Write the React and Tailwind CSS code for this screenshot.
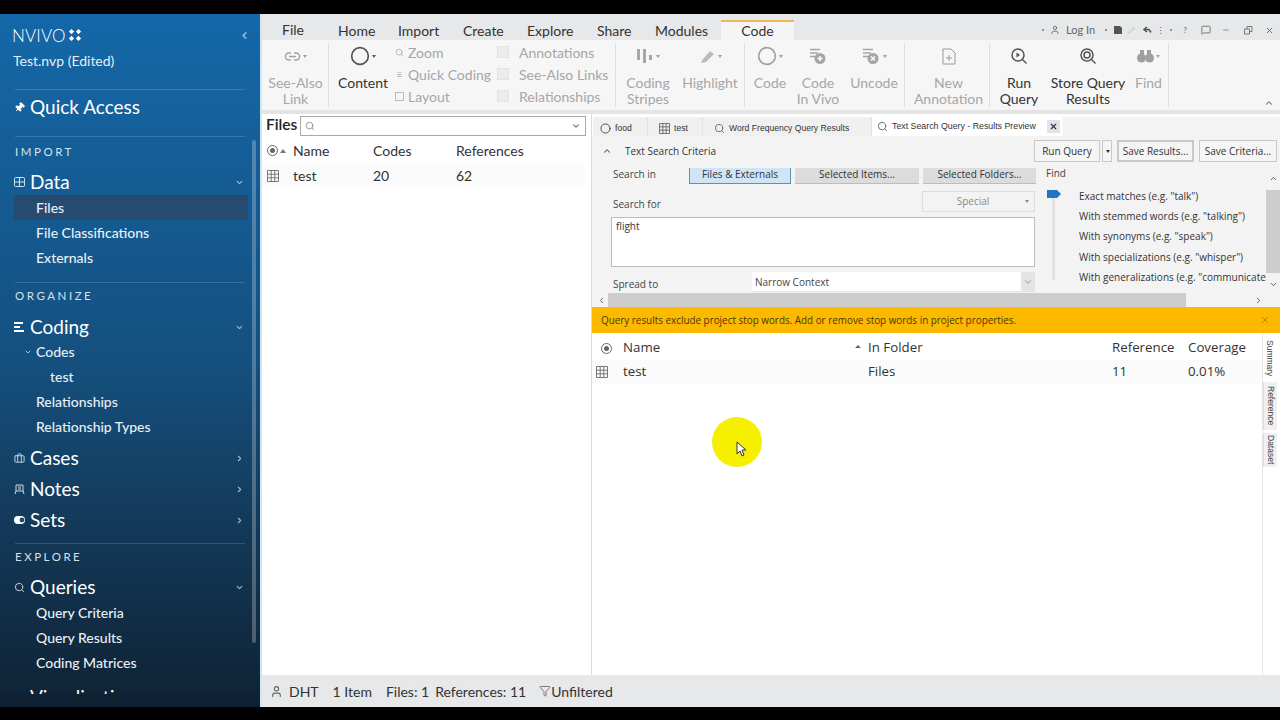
import React from 'react';
import {
  Pin, ChevronDown, ChevronRight, ChevronLeft, ChevronUp, Search, Link2, Circle, Briefcase,
  Minus, X, MessageSquare, User, Filter, Pencil,
} from 'lucide-react';

const LATO = { fontFamily: 'Lato, sans-serif' };
const ARIAL = { fontFamily: '"Liberation Sans", sans-serif' };

const GridIcon = ({ size = 12, className = '' }) => (
  <svg width={size} height={size} viewBox="0 0 12 12" fill="none" stroke="currentColor" className={className}>
    <path d="M.5.5h11v11H.5zM.5 4.2h11M.5 7.8h11M4.2.5v11M7.8.5v11" />
  </svg>
);

const NavHead = ({ icon, label, chevron }) => (
  <div className="flex items-center h-[31px] pt-[3px] pl-[14px] pr-[16px] text-[19px] text-white">
    <span className="w-[16px] flex justify-start text-[#c9dbe8]">{icon}</span>
    <span className="flex-1">{label}</span>
    {chevron === 'down' && <ChevronDown size={9} strokeWidth={3} className="text-[#9fb9cc]" />}
    {chevron === 'right' && <ChevronRight size={9} strokeWidth={3} className="text-[#9fb9cc]" />}
  </div>
);

const NavItem = ({ label, active, indent = 'pl-[22px]' }) => (
  <div className={`h-[25px] ml-[14px] mr-[12px] flex items-center text-[14px] text-[#e8f0f6] font-medium ${indent} ${active ? 'bg-[#264a70]' : ''}`}>
    {label}
  </div>
);

const NavSection = ({ label, className }) => (
  <div className={`ml-[15px] text-[11.5px] tracking-[0.22em] text-[#d5e1ea] ${className}`}>{label}</div>
);

const Rule = ({ className }) => <div className={`mx-[15px] h-px bg-white/15 ${className}`} />;

const Sidebar = () => (
  <aside className="w-[260px] shrink-0 h-full flex flex-col overflow-hidden relative bg-gradient-to-b from-[#1468a9] via-[#14507f] to-[#0f2233]" style={LATO}>
    <div className="h-[32px] pt-[10px] pl-[12px] pr-[10px] flex items-center justify-between text-white">
      <div className="flex items-center gap-[2px]">
        <span className="text-[17px] font-light leading-none tracking-[0.01em]">NVIVO</span>
        <svg width="14" height="12" viewBox="0 0 14 12" fill="white">
          <path d="M3.5 0l2.6 2.6-2.6 2.6L.9 2.6zM10.5 0l2.6 2.6-2.6 2.6-2.6-2.6zM3.5 6.8l2.6 2.6L3.5 12 .9 9.4zM10.5 6.8l2.6 2.6-2.6 2.6-2.6-2.6z" />
        </svg>
      </div>
      <ChevronLeft size={11} strokeWidth={3} className="text-[#a9c4d9]" />
    </div>
    <div className="mt-[3px] pl-[13px] text-[14px] text-[#e4edf4] leading-[24px]">Test.nvp (Edited)</div>
    <Rule className="mt-[16px]" />
    <div className="h-[36px] -mt-[1px] flex items-center pl-[14px] text-[19px] text-white">
      <Pin size={11} fill="white" className="mr-[5px] rotate-45" />
      Quick Access
    </div>
    <Rule className="mt-[11px]" />
    <NavSection label="IMPORT" className="mt-[8px] leading-[14px]" />
    <div className="mt-[6px]">
      <NavHead chevron="down" label="Data" icon={
        <svg width="11" height="10" viewBox="0 0 11 10" fill="none" stroke="#d5e1ea"><rect x=".5" y=".5" width="10" height="9" rx="1" /><path d="M.5 5h10M5.5 5v4.5M5.5.5V5" /></svg>
      } />
    </div>
    <div className="-mt-[1px]">
      <NavItem label="Files" active />
      <NavItem label="File Classifications" />
      <NavItem label="Externals" />
    </div>
    <Rule className="mt-[12px]" />
    <NavSection label="ORGANIZE" className="mt-[6px] leading-[14px]" />
    <div className="mt-[7px]">
      <NavHead chevron="down" label="Coding" icon={
        <svg width="11" height="10" viewBox="0 0 11 10" fill="white"><path d="M0 0h9v2H0zM0 4h6v2H0zM0 8h10v2H0z" /></svg>
      } />
    </div>
    <div className="-mt-[2px]">
      <div className="h-[25px] ml-[24px] flex items-center text-[14px] text-[#e8f0f6] font-medium">
        <ChevronDown size={8} strokeWidth={3} className="mr-[4px] text-[#a9c4d9]" />Codes
      </div>
      <NavItem label="test" indent="pl-[36px]" />
      <NavItem label="Relationships" />
      <NavItem label="Relationship Types" />
    </div>
    <div className="mt-[2px] flex flex-col">
      <NavHead chevron="right" label="Cases" icon={<Briefcase size={11} />} />
      <NavHead chevron="right" label="Notes" icon={
        <svg width="11" height="11" viewBox="0 0 11 11" fill="none" stroke="#c9dbe8"><path d="M2 1h7v6H2zM2 7l-1 3M9 7l1 3M4 3h3M4 5h3" /></svg>
      } />
      <NavHead chevron="right" label="Sets" icon={
        <svg width="11" height="8" viewBox="0 0 11 8"><rect width="11" height="8" rx="4" fill="white" /><circle cx="8" cy="4" r="2.4" fill="#14507f" /></svg>
      } />
    </div>
    <Rule className="mt-[9px]" />
    <NavSection label="EXPLORE" className="mt-[6px] leading-[14px]" />
    <div className="mt-[6px]"><NavHead chevron="down" label="Queries" icon={<Search size={11} />} /></div>
    <div className="-mt-[1px]">
      <NavItem label="Query Criteria" />
      <NavItem label="Query Results" />
      <NavItem label="Coding Matrices" />
    </div>
    <div className="mt-[10px] h-[9px] overflow-hidden flex items-start pl-[14px] text-[19px] leading-[24px] text-white">
      <span className="w-[16px]">··</span>Visualizations
    </div>
    <div className="flex-1 bg-[#0f2233]" />
    {/* sidebar scrollbar */}
    <div className="absolute left-[252px] top-[126px] w-[4px] h-[503px] bg-white/25 rounded-sm" />
  </aside>
);

const TopTab = ({ label, className = '' }) => (
  <div className={`text-[14px] text-[#333] leading-none ${className}`}>{label}</div>
);

const Slot = ({ w, children }) => (
  <span className="flex items-center justify-center shrink-0" style={{ width: w }}>{children}</span>
);

const Dot = () => <span className="w-[2px] h-[2px] rounded-full bg-[#777]" />;

const TabBar = () => (
  <div className="h-[26px] bg-[#e6e8e9] flex items-end text-[#333] shrink-0">
    <TopTab label="File" className="ml-[20px] w-[56px] mb-[3px]" />
    <TopTab label="Home" className="w-[60px] mb-[2px]" />
    <TopTab label="Import" className="w-[65px] mb-[2px]" />
    <TopTab label="Create" className="w-[64px] mb-[2px]" />
    <TopTab label="Explore" className="w-[70px] mb-[2px]" />
    <TopTab label="Share" className="w-[58px] mb-[2px]" />
    <TopTab label="Modules" className="w-[71px] mb-[2px]" />
    <div className="w-[73px] h-[20px] -ml-[5px] bg-[#f5f5f5] border-t-2 border-[#f0b35a] text-[14px] text-center leading-[17px]">Code</div>
    <div className="flex-1 h-full flex items-center justify-end pr-[6px] text-[#666] pt-[6px]">
      <Slot w={12}><Dot /></Slot>
      <Slot w={12}><User size={10} /></Slot>
      <span className="ml-[5px] w-[28px] text-[11px] whitespace-nowrap">Log In</span>
      <span className="w-[6px]" />
      <Slot w={12}><Dot /></Slot>
      <Slot w={12}>
        <svg width="8" height="8" viewBox="0 0 8 8" fill="#555"><path d="M0 0h6l2 2v6H0z" /></svg>
      </Slot>
      <Slot w={14}><Pencil size={7} className="text-[#bbb]" /></Slot>
      <Slot w={18}>
        <svg width="9" height="8" viewBox="0 0 9 8" fill="none" stroke="#555" strokeWidth="1.6"><path d="M4 1L1 3.5 4 6M1 3.5h5l2 3" /></svg>
      </Slot>
      <Slot w={8}><span className="text-[9px] leading-none">⋮</span></Slot>
      <Slot w={14}><Dot /></Slot>
      <Slot w={14}><span className="text-[8px] leading-none">?</span></Slot>
      <Slot w={28}><MessageSquare size={10} /></Slot>
      <Slot w={12}><Minus size={8} /></Slot>
      <Slot w={32}>
        <svg width="9" height="9" viewBox="0 0 9 9" fill="none" stroke="#777"><path d="M.5 3h5v5h-5zM3 3V.5h5v5H6" /></svg>
      </Slot>
      <Slot w={10}><X size={9} strokeWidth={2.5} /></Slot>
    </div>
  </div>
);

const RibbonBtn = ({ icon, lines, width, disabled, className = '' }) => (
  <div className={`h-full flex flex-col items-center shrink-0 ${disabled ? 'text-[#a6a6a6]' : 'text-[#333]'} ${className}`} style={{ width }}>
    <div className={`h-[30px] shrink-0 flex items-center justify-center pb-[4px] ${disabled ? 'text-[#a0a0a0]' : 'text-[#555]'}`}>{icon}</div>
    <div className="text-[14px] leading-[16px] text-center whitespace-nowrap mt-[2px]">
      {lines.map((l) => <div key={l}>{l}</div>)}
    </div>
  </div>
);

const Dropdown = () => <span className="ml-[2px] w-0 h-0 border-x-[2.5px] border-x-transparent border-t-[3px] border-t-current" />;

const StackIcon = ({ badge }) => (
  <span className="flex items-center">
    <svg width="20" height="18" viewBox="0 0 20 18" fill="none" stroke="#a6a6a6">
      <path d="M2 2.5h10M2 6h8M2 9.5h5" strokeWidth="1.6" />
      <circle cx="12" cy="11.5" r="5.5" fill="#a6a6a6" stroke="none" />
      {badge === 'plus' && <path d="M9.5 11.5h5M12 9v5" stroke="#fff" strokeWidth="1.5" />}
      {badge === 'x' && <path d="M10 9.5l4 4M14 9.5l-4 4" stroke="#fff" strokeWidth="1.5" />}
    </svg>
  </span>
);

const Group = ({ width, children }) => (
  <div className="h-[64px] mt-[3px] flex shrink-0 border-r border-[#dedede]" style={{ width }}>{children}</div>
);

const SmallRow = ({ icon, label }) => (
  <div className="h-[22px] flex items-center gap-[3px] whitespace-nowrap">
    <span className="w-[11px] flex justify-center text-[#aaa]">{icon}</span>
    <span>{label}</span>
  </div>
);

const CheckRow = ({ label }) => (
  <div className="h-[22px] flex items-center whitespace-nowrap">
    <span className="w-[12px] h-[12px] bg-[#ececec] border border-[#e2e2e2] mr-[10px]" />
    <span>{label}</span>
  </div>
);

const Ribbon = () => (
  <div className="h-[70px] bg-[#f6f6f6] flex shrink-0 relative">
    <Group width={67}>
      <RibbonBtn width={67} disabled lines={['See-Also', 'Link']} icon={<span className="flex items-center"><Link2 size={17} /><Dropdown /></span>} />
    </Group>
    <Group width={287}>
      <RibbonBtn width={68} lines={['Content']} icon={<span className="flex items-center"><Circle size={20} strokeWidth={2} /><Dropdown /></span>} />
      <div className="-ml-[3px] -mt-[2px] w-[102px] text-[14px] text-[#a6a6a6]">
        <SmallRow icon={<Search size={9} />} label="Zoom" />
        <SmallRow icon={<span className="text-[10px] leading-none">≡</span>} label="Quick Coding" />
        <SmallRow icon={<span className="w-[9px] h-[9px] border border-[#bbb] block" />} label="Layout" />
      </div>
      <div className="ml-[1px] -mt-[2px] text-[14px] text-[#a6a6a6]">
        <CheckRow label="Annotations" />
        <CheckRow label="See-Also Links" />
        <CheckRow label="Relationships" />
      </div>
    </Group>
    <Group width={129}>
      <RibbonBtn width={64} disabled lines={['Coding', 'Stripes']} icon={
        <span className="flex items-center"><svg width="18" height="16" viewBox="0 0 18 16" fill="#a6a6a6"><path d="M1 1h3v11H1zM7 1h3v14H7zM13 7h3v5h-3z" /></svg><Dropdown /></span>
      } />
      <RibbonBtn width={60} disabled lines={['Highlight']} icon={
        <span className="flex items-center"><svg width="17" height="15" viewBox="0 0 17 15" fill="#bbb"><path d="M2 14l2-4 7-8 4 3-8 8z" /></svg><Dropdown /></span>
      } />
    </Group>
    <Group width={160}>
      <RibbonBtn width={50} disabled lines={['Code']} icon={<span className="flex items-center"><Circle size={20} strokeWidth={2} /><Dropdown /></span>} />
      <RibbonBtn width={46} disabled lines={['Code', 'In Vivo']} icon={<StackIcon badge="plus" />} />
      <RibbonBtn width={60} disabled className="ml-[3px]" lines={['Uncode']} icon={<span className="flex items-center"><StackIcon badge="x" /><Dropdown /></span>} />
    </Group>
    <Group width={85}>
      <RibbonBtn width={85} disabled className="pl-[2px]" lines={['New', 'Annotation']} icon={
        <svg width="14" height="17" viewBox="0 0 14 17" fill="none" stroke="#999"><path d="M1 1h8l4 4v11H1zM7 7v6M4 10h6" /></svg>
      } />
    </Group>
    <Group width={179}>
      <RibbonBtn width={58} lines={['Run', 'Query']} icon={
        <svg width="18" height="18" viewBox="0 0 18 18" fill="none" stroke="#555" strokeWidth="1.5"><circle cx="8" cy="8" r="6" /><path d="M12.5 12.5l4 4" /><path d="M6.5 5.5l3.5 2.5-3.5 2.5z" fill="#555" stroke="none" /></svg>
      } />
      <RibbonBtn width={80} lines={['Store Query', 'Results']} icon={
        <svg width="18" height="18" viewBox="0 0 18 18" fill="none" stroke="#555" strokeWidth="1.5"><circle cx="8" cy="8" r="6" /><circle cx="8" cy="8" r="3" /><path d="M12.5 12.5l4 4" /></svg>
      } />
      <RibbonBtn width={41} disabled lines={['Find']} icon={
        <span className="flex items-center"><svg width="17" height="14" viewBox="0 0 17 14" fill="#a0a0a0"><circle cx="4.5" cy="9" r="4.5" /><circle cx="12.5" cy="9" r="4.5" /><path d="M3 1h4v5H3zM10 1h4v5h-4z" /></svg><Dropdown /></span>
      } />
    </Group>
    <div className="flex-1 flex items-end justify-end pb-[2px] pr-[6px]">
      <ChevronUp size={10} strokeWidth={2.5} className="text-[#666]" />
    </div>
  </div>
);

const AddCircle = () => (
  <span className="w-[11px] h-[11px] rounded-full border border-[#666] flex items-center justify-center">
    <span className="w-[5px] h-[5px] rounded-full bg-[#666]" />
  </span>
);

const FilesPanel = () => (
  <section className="w-[330px] shrink-0 flex flex-col bg-white border-r border-[#dcdcdc]">
    <div className="h-[24px] flex items-center pl-[4px] pr-[5px] bg-white">
      <span className="text-[15.5px] text-[#222] font-semibold w-[34px] -mt-[3px]">Files</span>
      <div className="flex-1 h-[20px] border border-[#a8a8a8] flex items-center justify-between px-[4px] text-[#888]">
        <Search size={10} />
        <ChevronDown size={10} strokeWidth={2.5} className="text-[#555]" />
      </div>
    </div>
    <div className="h-[25px] pl-[5px] flex items-center text-[14px] text-[#333]">
      <span className="w-[26px] flex items-center gap-[2px]"><AddCircle /><span className="w-0 h-0 border-x-[3px] border-x-transparent border-b-[4px] border-b-[#777]" /></span>
      <span className="w-[80px]">Name</span>
      <span className="w-[83px]">Codes</span>
      <span>References</span>
    </div>
    <div className="h-[25px] w-[323px] pl-[5px] flex items-center text-[14px] text-[#333] bg-[#fbfbfb]">
      <span className="w-[26px]"><GridIcon className="text-[#777]" /></span>
      <span className="w-[80px]">test</span>
      <span className="w-[83px]">20</span>
      <span>62</span>
    </div>
  </section>
);

const DocTab = ({ icon, label, width, pl }) => (
  <div className="h-[19px] flex items-center pt-[3px] text-[8.6px] whitespace-nowrap text-[#333] border-r border-[#e4e4e4]" style={{ ...ARIAL, width, paddingLeft: pl }}>
    <span className="mr-[4px] flex">{icon}</span>{label}
  </div>
);

const CritBtn = ({ label, width, className = '' }) => (
  <div className={`h-[22px] flex items-center justify-center text-[10px] text-[#333] bg-[#f5f5f5] border border-[#c8c8c8] ${className}`} style={{ width }}>{label}</div>
);

const SegBtn = ({ label, width, active }) => (
  <div className={`h-[16px] flex items-center justify-center text-[10px] text-[#333] leading-none pb-[4px] ${active ? 'bg-[#cfe5f6] border-x border-b border-[#5b93b8]' : 'bg-[#dcdcdc] border-b border-[#bdbdbd]'}`} style={{ width }}>{label}</div>
);

const FIND_OPTIONS = [
  'Exact matches (e.g. "talk")',
  'With stemmed words (e.g. "talking")',
  'With synonyms (e.g. "speak")',
  'With specializations (e.g. "whisper")',
  'With generalizations (e.g. "communicate")',
];

const Criteria = () => (
  <div className="bg-[#f3f3f3] shrink-0 flex flex-col text-[#444]">
    <div className="h-[30px] flex items-start pt-[4px] pr-[3px]">
      <ChevronUp size={10} strokeWidth={2.5} className="ml-[10px] mt-[6px] text-[#555]" />
      <span className="ml-[13px] mt-[4px] text-[10px] leading-[14px] text-[#333]">Text Search Criteria</span>
      <div className="flex-1" />
      <CritBtn label="Run Query" width={66} />
      <div className="w-[10px] ml-[2px] h-[22px] bg-[#f5f5f5] border border-[#c8c8c8] flex items-center justify-center text-[#333]"><Dropdown /></div>
      <CritBtn label="Save Results..." width={77} className="ml-[5px] border-[#666] border-2" />
      <CritBtn label="Save Criteria..." width={78} className="ml-[5px]" />
    </div>
    <div className="h-[127px] flex overflow-hidden text-[10px]">
      <div className="w-[454px] shrink-0 pl-[21px] pt-[2px]">
        <div className="flex items-start">
          <span className="w-[76px] leading-[14px] -mt-[1px]">Search in</span>
          <SegBtn label="Files & Externals" width={102} active />
          <span className="w-[4px]" />
          <SegBtn label="Selected Items..." width={124} />
          <span className="w-[4px]" />
          <SegBtn label="Selected Folders..." width={113} />
        </div>
        <div className="flex items-center justify-between mt-[7px] h-[21px] pr-[11px]">
          <span className="mt-[6px]">Search for</span>
          <div className="w-[113px] h-[21px] bg-[#f3f3f3] border border-[#dcdcdc] flex items-center text-[#888]">
            <span className="flex-1 text-center">Special</span><span className="mr-[5px] flex"><Dropdown /></span>
          </div>
        </div>
        <div className="-ml-[2px] mt-[5px] mr-[11px] h-[50px] bg-white border border-[#bdbdbd] px-[4px] py-[1px] text-[#333]">flight</div>
        <div className="flex items-center mt-[5px]">
          <span className="w-[139px] mt-[4px]">Spread to</span>
          <div className="w-[283px] h-[20px] bg-white flex items-center justify-between pl-[3px] border-b border-[#e5e5e5]">
            <span className="pt-[1px]">Narrow Context</span>
            <span className="w-[14px] h-[20px] bg-[#e4e4e4] flex items-center justify-center"><ChevronDown size={10} className="text-[#888]" /></span>
          </div>
        </div>
      </div>
      <div className="flex-1 flex flex-col overflow-hidden">
        <div className="leading-[14px]">Find</div>
        <div className="flex">
          <div className="w-[33px] shrink-0">
            <svg width="14" height="8" viewBox="0 0 14 8" fill="#1f74c4" className="mt-[10px] ml-[1px]"><path d="M0 0h10l4 4-4 4H0z" /></svg>
            <div className="ml-[6px] w-[3px] h-[82px] bg-[#e2e2e2]" />
          </div>
          <div className="whitespace-nowrap leading-[20.2px] text-[#333] mt-[6px]">
            {FIND_OPTIONS.map((o) => <div key={o}>{o}</div>)}
          </div>
        </div>
      </div>
      <div className="w-[14px] shrink-0 flex flex-col items-center bg-[#f3f3f3]">
        <ChevronUp size={9} strokeWidth={2.5} className="mt-[8px] text-[#555]" />
        <div className="w-full h-[83px] mt-[7px] bg-[#cdcdcd]" />
        <ChevronDown size={9} strokeWidth={2.5} className="mt-[7px] text-[#555]" />
      </div>
    </div>
    <div className="h-[14px] flex items-center">
      <ChevronLeft size={9} strokeWidth={2.5} className="ml-[5px] text-[#555]" />
      <div className="ml-[2px] w-[578px] h-full bg-[#cdcdcd]" />
      <div className="flex-1" />
      <ChevronRight size={9} strokeWidth={2.5} className="mr-[17px] text-[#555]" />
    </div>
  </div>
);

const SideTab = ({ label, height, active }) => (
  <div className={`w-[14px] flex items-center justify-center text-[8.5px] text-[#444] [writing-mode:vertical-rl] ${active ? 'bg-white' : 'bg-[#f0f0f0] border-l border-[#ddd]'}`} style={{ height }}>{label}</div>
);

const Results = () => (
  <div className="flex-1 flex min-h-0 bg-white">
    <div className="flex-1 text-[13.3px] text-[#333]">
      <div className="h-[24px] mt-[3px] flex items-center">
        <span className="w-[31px] pl-[9px]"><AddCircle /></span>
        <span className="w-[232px]">Name</span>
        <span className="w-[13px] mb-[3px]"><span className="block w-0 h-0 border-x-[3px] border-x-transparent border-b-[3px] border-b-[#666]" /></span>
        <span className="w-[244px]">In Folder</span>
        <span className="w-[76px]">Reference</span>
        <span>Coverage</span>
      </div>
      <div className="h-[24px] flex items-center bg-[#fbfbfb]">
        <span className="w-[31px] pl-[4px]"><GridIcon className="text-[#777]" /></span>
        <span className="w-[245px]">test</span>
        <span className="w-[244px]">Files</span>
        <span className="w-[76px]">11</span>
        <span>0.01%</span>
      </div>
    </div>
    <div className="w-[18px] shrink-0 flex flex-col pt-[5px] pr-[2px] border-l border-[#e6e6e6] gap-[3px]" style={ARIAL}>
      <SideTab label="Summary" height={41} active />
      <SideTab label="Reference" height={48} />
      <SideTab label="Dataset" height={34} />
    </div>
  </div>
);

const QueryPanel = () => (
  <section className="flex-1 min-w-0 flex flex-col" style={{ fontFamily: '"Open Sans", sans-serif' }}>
    <div className="h-[22px] pt-[3px] bg-white flex items-end shrink-0 pl-[1px]">
      <div className="flex bg-[#f0f0f0]">
        <DocTab width={55} pl={7} label="food" icon={<Circle size={11} className="text-[#444]" />} />
        <DocTab width={55} pl={11} label="test" icon={<GridIcon size={11} className="text-[#666]" />} />
        <DocTab width={169} pl={11} label="Word Frequency Query Results" icon={<Search size={11} className="text-[#666]" />} />
      </div>
      <div className="w-[191px] h-[21px] bg-white flex items-center pl-[5px] pt-[2px] text-[8.8px] whitespace-nowrap text-[#333]" style={ARIAL}>
        <Search size={11} className="text-[#666] mr-[4px]" />
        Text Search Query - Results Preview
        <span className="ml-[11px] w-[13px] h-[13px] shrink-0 bg-[#dfe3ea] flex items-center justify-center"><X size={9} strokeWidth={3} className="text-[#334]" /></span>
      </div>
      <div className="flex-1 h-[19px] bg-[#f3f3f3]" />
    </div>
    <Criteria />
    <div className="h-[26px] bg-[#fcb900] flex items-center justify-between shrink-0 pl-[9px] pr-[10px] text-[9.9px] text-[#4a3a08]">
      <span>Query results exclude project stop words. Add or remove stop words in project properties.</span>
      <X size={10} className="text-[#a07a10]" />
    </div>
    <Results />
  </section>
);

const StatusBar = () => (
  <div className="h-[32px] bg-[#e6e8ea] flex items-center pl-[8px] text-[14px] text-[#333] shrink-0">
    <User size={13} className="text-[#666] mr-[6px]" />
    <span>DHT</span>
    <span className="ml-[14px]">1 Item</span>
    <span className="ml-[14px]">Files: 1</span>
    <span className="ml-[6px]">References: 11</span>
    <span className="ml-[13px] flex items-center"><Filter size={12} className="text-[#777]" />Unfiltered</span>
  </div>
);

export default function App() {
  return (
    <div className="w-[1280px] h-[720px] bg-black pt-[14px] pb-[13px] overflow-hidden">
      <div className="h-full flex">
        <Sidebar />
        <main className="flex-1 min-w-0 flex flex-col border-l-2 border-[#cfe6f5] bg-white" style={LATO}>
          <TabBar />
          <Ribbon />
          <div className="h-[4px] bg-[#e4e4e4] shrink-0" />
          <div className="flex-1 min-h-0 flex">
            <FilesPanel />
            <QueryPanel />
          </div>
          <StatusBar />
        </main>
      </div>
      {/* highlighted mouse pointer from the screen recording */}
      <div className="absolute left-[712px] top-[417px] w-[50px] h-[50px] rounded-full bg-[#f6f000] flex items-center justify-center">
        <svg width="11" height="16" viewBox="0 0 11 16" className="ml-[8px] mt-[13px]"><path d="M1 1v12l3-3 2 5 2-1-2-5h4z" fill="white" stroke="#333" /></svg>
      </div>
    </div>
  );
}
